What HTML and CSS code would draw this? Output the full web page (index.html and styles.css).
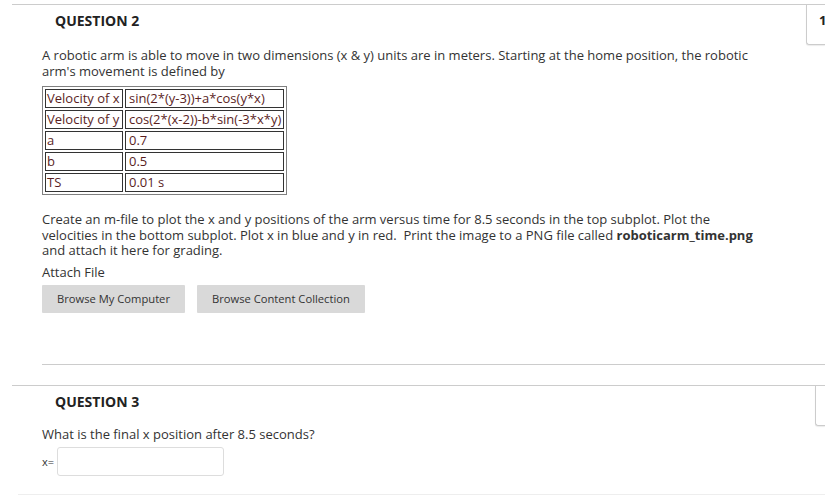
FILE: index.html
```html
<!DOCTYPE html>
<html>
<head>
<meta charset="utf-8">
<link rel="stylesheet" href="styles.css">
</head>
<body>
<div class="page">
  <section class="question q2">
    <div class="qhead">
      <h3 class="qtitle">QUESTION 2</h3>
      <div class="points">1</div>
    </div>
    <div class="qbody">
      <p class="text">A robotic arm is able to move in two dimensions (x &amp; y) units are in meters. Starting at the home position, the robotic arm's movement is defined by</p>
      <table class="data">
        <tr><td class="c1">Velocity of x</td><td class="c2">sin(2*(y-3))+a*cos(y*x)</td></tr>
        <tr><td class="c1">Velocity of y</td><td class="c2">cos(2*(x-2))-b*sin(-3*x*y)</td></tr>
        <tr><td class="c1">a</td><td class="c2">0.7</td></tr>
        <tr><td class="c1">b</td><td class="c2">0.5</td></tr>
        <tr><td class="c1">TS</td><td class="c2">0.01 s</td></tr>
      </table>
      <p class="text task">Create an m-file to plot the x and y positions of the arm versus time for 8.5 seconds in the top subplot. Plot the velocities in the bottom subplot. Plot x in blue and y in red.&nbsp; Print the image to a PNG file called <b>roboticarm_time.png</b> and attach it here for grading.</p>
      <div class="attach-label">Attach File</div>
      <div class="buttons">
        <button class="btn">Browse My Computer</button>
        <button class="btn">Browse Content Collection</button>
      </div>
      <div class="inner-rule"></div>
    </div>
  </section>
  <section class="question q3">
    <div class="qhead">
      <h3 class="qtitle">QUESTION 3</h3>
      <div class="points p3"></div>
    </div>
    <div class="qbody">
      <p class="text">What is the final x position after 8.5 seconds?</p>
      <div class="answer">
        <span class="xlabel">x=</span>
        <span class="input"></span>
      </div>
    </div>
  </section>
  <div class="bottom-rule"></div>
</div>
</body>
</html>
```

FILE: styles.css
```css
html, body {
  margin: 0;
  padding: 0;
  background: #fff;
}
body {
  font-family: "Open Sans", "Liberation Sans", sans-serif;
  color: #333;
  width: 825px;
  height: 495px;
  overflow: hidden;
}
.page {
  padding-top: 4px;
  padding-left: 12px;
}
.question {
  border-top: 1px solid #cccccc;
}
.qhead {
  display: flex;
  justify-content: space-between;
  align-items: flex-start;
}
.qtitle {
  margin: 0;
  padding: 6px 0 0 43px;
  font-size: 14px;
  font-weight: 700;
  line-height: 19px;
  color: #222;
}
.points {
  width: 6px;
  height: 39px;
  border-left: 1px solid #cccccc;
  border-bottom: 1px solid #cccccc;
  border-bottom-left-radius: 3px;
  box-shadow: 0 1px 1px rgba(0,0,0,0.08);
  font-size: 13px;
  font-weight: 700;
  color: #222;
  padding: 0 0 0 12px;
  line-height: 31px;
  overflow: visible;
  white-space: nowrap;
}
.points.p3 {
  width: 0;
  padding-left: 9px;
}
.qbody {
  padding-left: 30px;
}
.text {
  margin: 0;
  font-size: 13px;
  line-height: 15.5px;
  color: #333;
  width: 720px;
}
.q2 .text:first-child {
  margin-top: 3px;
}
.data {
  margin-top: 7px;
  border: 1px solid #808080;
  border-spacing: 2px;
  font-size: 13px;
  color: #5a1e1e;
}
.data td {
  border: 1px solid #333;
  padding: 0 1px;
  height: 17px;
  line-height: 17px;
  white-space: nowrap;
}
.data .c1 {
  width: 74px;
}
.data .c2 {
  width: 153px;
  padding-left: 3px;
}
.task {
  margin-top: 17px;
}
.attach-label {
  margin-top: 6px;
  font-size: 13px;
  line-height: 15px;
  color: #333;
}
.buttons {
  display: flex;
  gap: 12px;
  margin-top: 5px;
}
.btn {
  font-family: "Open Sans", "Liberation Sans", sans-serif;
  font-size: 11.2px;
  color: #333;
  background: #d9d9d9;
  border: none;
  height: 28px;
  padding: 0 15px;
  margin: 0;
  border-radius: 1px;
}
.inner-rule {
  margin-top: 51px;
  border-top: 1px solid #cccccc;
  margin-bottom: 20px;
}
.q3 .qtitle {
  padding-top: 6px;
}
.q3 .text:first-child {
  margin-top: 1px;
}
.answer {
  display: flex;
  align-items: center;
  margin-top: 5px;
}
.xlabel {
  font-size: 11px;
  color: #333;
  width: 15px;
}
.input {
  width: 165px;
  height: 27px;
  border: 1px solid #dddddd;
  border-radius: 3px;
  background: #fff;
}
.bottom-rule {
  margin-top: 18px;
  margin-left: 6px;
  border-top: 1px solid #eeeeee;
}
```
